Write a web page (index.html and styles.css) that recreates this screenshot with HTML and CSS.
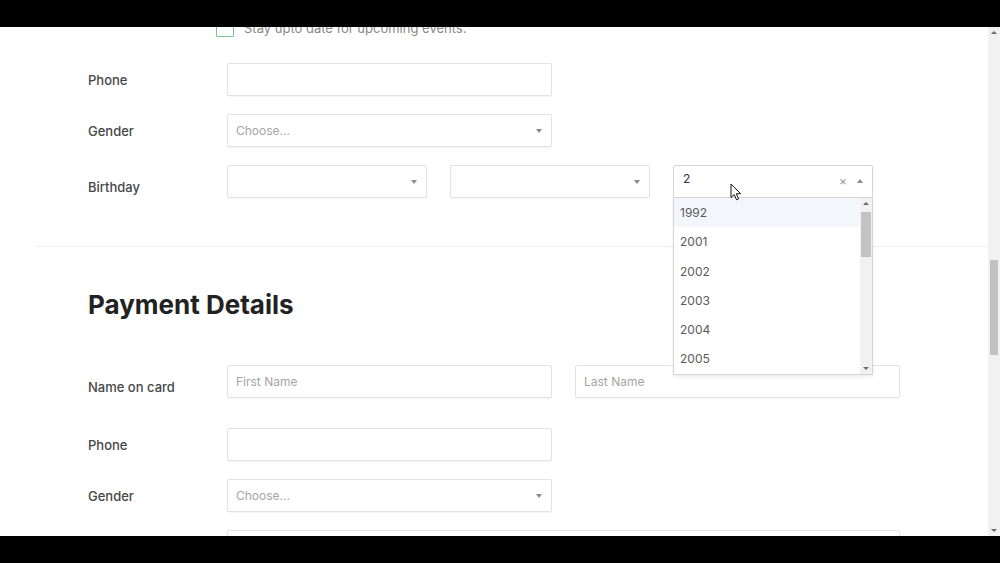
FILE: index.html
```html
<!DOCTYPE html>
<html>
<head>
<meta charset="utf-8">
<link rel="stylesheet" href="styles.css">
</head>
<body>
<div class="bar"></div>
<div class="screen">
  <main class="page">
    <div class="check-row">
      <span class="checkbox"></span>
      <span class="check-text">Stay upto date for upcoming events.</span>
    </div>

    <div class="row r-first">
      <label class="label">Phone</label>
      <div class="fields"><div class="input w-half"></div></div>
    </div>
    <div class="row">
      <label class="label">Gender</label>
      <div class="fields"><div class="input select w-half"><span class="ph">Choose...</span><span class="caret"></span></div></div>
    </div>
    <div class="row">
      <label class="label low">Birthday</label>
      <div class="fields">
        <div class="input select w-third"><span></span><span class="caret"></span></div>
        <div class="input select w-third"><span></span><span class="caret"></span></div>
        <div class="combo w-third">
          <div class="input select open">
            <span class="val">2</span>
            <span class="tools"><span class="clear">×</span><span class="caret up"></span></span>
          </div>
          <div class="menu">
            <ul class="options">
              <li class="opt active">1992</li>
              <li class="opt">2001</li>
              <li class="opt">2002</li>
              <li class="opt">2003</li>
              <li class="opt">2004</li>
              <li class="opt">2005</li>
            </ul>
            <div class="mini-scroll">
              <span class="tri tri-up"></span>
              <div class="mini-track"><div class="mini-thumb"></div></div>
              <span class="tri tri-down"></span>
            </div>
          </div>
          <svg class="cursor" width="12" height="18" viewBox="0 0 12 18"><path d="M1 1 L1 14.5 L4.2 11.6 L6.6 16.8 L8.6 15.9 L6.3 10.8 L10.6 10.6 Z" fill="#fff" stroke="#111" stroke-width="1" stroke-linejoin="round"/></svg>
        </div>
      </div>
    </div>

    <div class="divider"></div>

    <h2 class="heading">Payment Details</h2>

    <div class="row r-name">
      <label class="label low">Name on card</label>
      <div class="fields">
        <div class="input w-half"><span class="ph">First Name</span></div>
        <div class="input w-half"><span class="ph">Last Name</span></div>
      </div>
    </div>
    <div class="row r-phone2">
      <label class="label">Phone</label>
      <div class="fields"><div class="input w-half"></div></div>
    </div>
    <div class="row">
      <label class="label">Gender</label>
      <div class="fields"><div class="input select w-half"><span class="ph">Choose...</span><span class="caret"></span></div></div>
    </div>
    <div class="row">
      <label class="label"></label>
      <div class="fields"><div class="input w-full"></div></div>
    </div>
  </main>
  <div class="scrollbar">
    <span class="tri tri-up"></span>
    <div class="track"><div class="thumb"></div></div>
    <span class="tri tri-down"></span>
  </div>
</div>
<div class="bar"></div>
</body>
</html>
```
FILE: styles.css
```css
* { box-sizing: border-box; }
html, body { margin: 0; padding: 0; background: #000; }
body {
  font-family: "Inter", "Open Sans", "Liberation Sans", sans-serif;
  width: 1000px;
  height: 563px;
  overflow: hidden;
}
.bar { height: 27px; background: #000; }
.screen {
  height: 509px;
  display: flex;
  background: #fff;
  overflow: hidden;
}
.page {
  flex: 1;
  overflow: hidden;
  background: #fff;
}

.check-row {
  display: flex;
  align-items: center;
  height: 18px;
  margin-top: -8px;
  padding-left: 216px;
}
.checkbox {
  width: 18px;
  height: 18px;
  border: 1.5px solid #7cc58a;
  border-radius: 1px;
  flex: none;
}
.check-text {
  margin-left: 10px;
  font-size: 13px;
  color: #8a8a8a;
  position: relative;
  top: 0;
}

.row {
  display: flex;
  align-items: center;
  padding-left: 88px;
  margin-top: 18px;
}
.r-first { margin-top: 26px; }
.r-name { margin-top: 43px; }
.r-phone2 { margin-top: 30px; }

.label {
  width: 139px;
  flex: none;
  font-size: 13px;
  font-weight: 500;
  color: #474747;
}
.label.low { padding-top: 11px; }

.fields {
  display: flex;
  gap: 23px;
}
.input {
  height: 33px;
  border: 1px solid #e2e2e2;
  border-radius: 2px;
  background: #fff;
  box-shadow: 0 1px 1px rgba(0,0,0,0.04);
  display: flex;
  align-items: center;
  padding: 0 9px 0 8px;
  font-size: 12px;
}
.w-half { width: 325px; }
.w-third { width: 200px; }
.w-full { width: 673px; }
.select { justify-content: space-between; }
.ph { color: #a5a5a5; font-size: 12px; }
.caret {
  width: 0;
  height: 0;
  border-left: 3px solid transparent;
  border-right: 3px solid transparent;
  border-top: 4px solid #8a8a8a;
}
.caret.up {
  border-top: 0;
  border-bottom: 4px solid #8a8a8a;
}

.combo { position: relative; height: 33px; }
.combo .input { width: 200px; border-color: #d6d6d6; border-radius: 2px 2px 0 0; }
.val { color: #333; font-size: 12px; padding-left: 1px; position: relative; top: -3px; }
.tools { display: flex; align-items: center; gap: 10px; position: relative; top: -1px; }
.clear { color: #9a9a9a; font-size: 12px; }

.menu {
  position: absolute;
  top: 33px;
  left: 0;
  width: 200px;
  height: 177px;
  background: #fff;
  border: 1px solid #d6d6d6;
  border-top: 0;
  box-shadow: 0 2px 3px rgba(0,0,0,0.08);
  display: flex;
  z-index: 5;
}
.options {
  list-style: none;
  margin: 0;
  padding: 0;
  flex: 1;
}
.opt {
  height: 29.3px;
  line-height: 30px;
  padding-left: 6px;
  font-size: 12px;
  color: #5a5a5a;
}
.opt.active { background: #f3f6fa; }

.mini-scroll {
  width: 12px;
  background: #f1f1f1;
  display: flex;
  flex-direction: column;
  align-items: center;
}
.mini-track { flex: 1; width: 100%; padding: 0 1px; }
.mini-thumb {
  margin-top: 3px;
  height: 45px;
  background: #c3c3c3;
}

.tri {
  width: 0;
  height: 0;
  border-left: 3px solid transparent;
  border-right: 3px solid transparent;
  margin: 4px 0;
  flex: none;
}
.tri-up { border-bottom: 3px solid #6a6a6a; }
.tri-down { border-top: 3px solid #6a6a6a; }

.cursor {
  position: absolute;
  left: 57px;
  top: 18px;
  z-index: 6;
}

.divider {
  margin: 48px 0 0 36px;
  height: 1px;
  background: #eeeeee;
}
.heading {
  margin: 41px 0 0 88px;
  font-size: 26px;
  line-height: 34px;
  font-weight: 700;
  color: #222;
  letter-spacing: 0;
}

.scrollbar {
  width: 12px;
  flex: none;
  background: #f1f1f1;
  display: flex;
  flex-direction: column;
  align-items: center;
}
.track { flex: 1; width: 100%; padding: 0 2px; }
.thumb {
  margin-top: 222px;
  height: 95px;
  background: #c1c1c1;
}
```
